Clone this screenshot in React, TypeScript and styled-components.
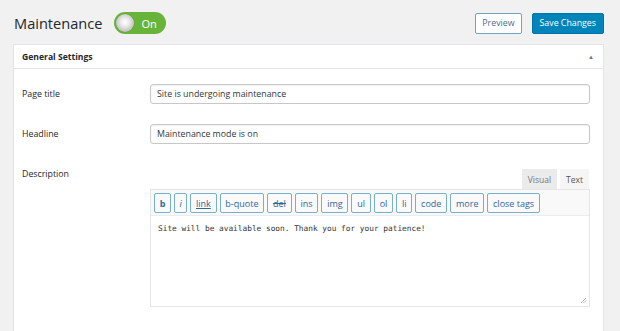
import React from "react";
import styled, { createGlobalStyle } from "styled-components";

const Global = createGlobalStyle`
  html, body { margin: 0; padding: 0; background: #f1f1f1; }
  body { font-family: "Open Sans", "Noto Sans", sans-serif; color: #23282d; }
  * { box-sizing: border-box; }
`;

const Page = styled.div`
  width: 620px;
  height: 331px;
  overflow: hidden;
  padding: 0 16px 0 13px;
`;

const TopBar = styled.div`
  display: flex;
  align-items: center;
  height: 44px;
  padding: 2px 0 0 1px;
`;

const Title = styled.h1`
  margin: 0;
  font-size: 14.6px;
  font-weight: 400;
  color: #23282d;
`;

const Toggle = styled.div`
  margin-left: 12px;
  width: 52px;
  height: 22px;
  border-radius: 11px;
  background: #68b43a;
  display: flex;
  align-items: center;
  padding: 0 2px;
  gap: 7px;
`;

const Knob = styled.span`
  width: 18px;
  height: 18px;
  border-radius: 50%;
  background: radial-gradient(circle at 50% 45%, #ffffff 0%, #ececec 30%, #c4c4c4 68%, #9a9a9a 100%);
  box-shadow: 0 0 1px rgba(0, 0, 0, 0.35);
`;

const ToggleText = styled.span`
  color: #fff;
  font-size: 11px;
`;

const Spacer = styled.div`
  flex: 1;
`;

const Button = styled.button<{ $primary?: boolean }>`
  font-family: inherit;
  font-size: 8.8px;
  height: 21px;
  padding: 0 ${(p) => (p.$primary ? "7px" : "6px")};
  margin-left: ${(p) => (p.$primary ? "10px" : "0")};
  border-radius: 2px;
  border: 1px solid ${(p) => (p.$primary ? "#0073aa" : "#6ea5c4")};
  background: ${(p) => (p.$primary ? "#0085ba" : "#fff")};
  color: ${(p) => (p.$primary ? "#fff" : "#4a6f86")};
`;

const Panel = styled.div`
  width: 591px;
  background: #fff;
  border: 1px solid #e2e4e7;
  height: 300px;
`;

const PanelHead = styled.div`
  height: 24px;
  display: flex;
  align-items: center;
  padding: 0 9px 0 8px;
  border-bottom: 1px solid #e5e5e5;
  font-size: 8.6px;
  font-weight: 700;
  color: #23282d;
`;

const Arrow = styled.span`
  margin-left: auto;
  font-size: 6px;
  color: #72777c;
`;

const Body = styled.div`
  padding: 5px 13px 0 8px;
`;

const Row = styled.div<{ $top?: boolean }>`
  display: flex;
  align-items: ${(p) => (p.$top ? "flex-start" : "center")};
  padding: 10px 0;
`;

const Label = styled.div<{ $top?: boolean }>`
  width: 128px;
  font-size: 8.8px;
  color: #23282d;
  flex-shrink: 0;
  padding-top: ${(p) => (p.$top ? "4px" : "0")};
`;

const Input = styled.input`
  flex: 1;
  height: 20px;
  border: 1px solid #c7c7c7;
  border-radius: 3px;
  box-shadow: inset 0 1px 2px rgba(0, 0, 0, 0.07);
  font-family: inherit;
  font-size: 8.8px;
  color: #32373c;
  padding: 0 6px;
  outline: none;
`;

const Editor = styled.div`
  flex: 1;
  padding-top: 5px;
`;

const Tabs = styled.div`
  display: flex;
  justify-content: flex-end;
  gap: 3px;
  padding-right: 1px;
`;

const Tab = styled.div<{ $active?: boolean }>`
  height: 20px;
  padding: 0 6px;
  display: flex;
  align-items: center;
  font-size: 8.5px;
  color: ${(p) => (p.$active ? "#555" : "#777")};
  background: ${(p) => (p.$active ? "#f5f5f5" : "#ebebeb")};
`;

const EditorBox = styled.div`
  border: 1px solid #e5e5e5;
`;

const Toolbar = styled.div`
  display: flex;
  gap: 3px;
  padding: 3px 3px 2px;
  background: #f9f9f9;
  border-bottom: 1px solid #ececec;
`;

const QT = styled.span<{ $b?: boolean; $i?: boolean; $u?: boolean; $s?: boolean }>`
  height: 20px;
  padding: 0 ${(p) => (p.$i ? "4.3px" : "4.8px")};
  display: flex;
  align-items: center;
  border: 1px solid #78b0cc;
  border-radius: 2px;
  background: #fafafa;
  font-size: 9px;
  color: #32679a;
  font-weight: ${(p) => (p.$b ? 700 : 400)};
  font-style: ${(p) => (p.$i ? "italic" : "normal")};
  text-decoration: ${(p) => (p.$u ? "underline" : p.$s ? "line-through" : "none")};
`;

const Area = styled.div`
  position: relative;
  height: 90px;
  background: #fff;
  padding: 8px 7px;
  font-family: "DejaVu Sans Mono", "Liberation Mono", monospace;
  font-size: 7.8px;
  color: #333;
`;

const Grip = styled.svg`
  position: absolute;
  right: 2px;
  bottom: 2px;
`;

const buttons: { t: string; b?: boolean; i?: boolean; u?: boolean; s?: boolean }[] = [
  { t: "b", b: true },
  { t: "i", i: true },
  { t: "link", u: true },
  { t: "b-quote" },
  { t: "del", s: true },
  { t: "ins" },
  { t: "img" },
  { t: "ul" },
  { t: "ol" },
  { t: "li" },
  { t: "code" },
  { t: "more" },
  { t: "close tags" },
];

export default function App() {
  return (
    <Page>
      <Global />
      <TopBar>
        <Title>Maintenance</Title>
        <Toggle>
          <Knob />
          <ToggleText>On</ToggleText>
        </Toggle>
        <Spacer />
        <Button>Preview</Button>
        <Button $primary>Save Changes</Button>
      </TopBar>
      <Panel>
        <PanelHead>
          General Settings
          <Arrow>▲</Arrow>
        </PanelHead>
        <Body>
          <Row>
            <Label>Page title</Label>
            <Input defaultValue="Site is undergoing maintenance" />
          </Row>
          <Row>
            <Label>Headline</Label>
            <Input defaultValue="Maintenance mode is on" />
          </Row>
          <Row $top>
            <Label $top>Description</Label>
            <Editor>
              <Tabs>
                <Tab>Visual</Tab>
                <Tab $active>Text</Tab>
              </Tabs>
              <EditorBox>
                <Toolbar>
                  {buttons.map((b) => (
                    <QT key={b.t} $b={b.b} $i={b.i} $u={b.u} $s={b.s}>
                      {b.t}
                    </QT>
                  ))}
                </Toolbar>
                <Area>
                  Site will be available soon. Thank you for your patience!
                  <Grip width="7" height="7" viewBox="0 0 7 7">
                    <path d="M6 1 L1 6 M6 3.5 L3.5 6" stroke="#bbb" strokeWidth="1" />
                  </Grip>
                </Area>
              </EditorBox>
            </Editor>
          </Row>
        </Body>
      </Panel>
    </Page>
  );
}
